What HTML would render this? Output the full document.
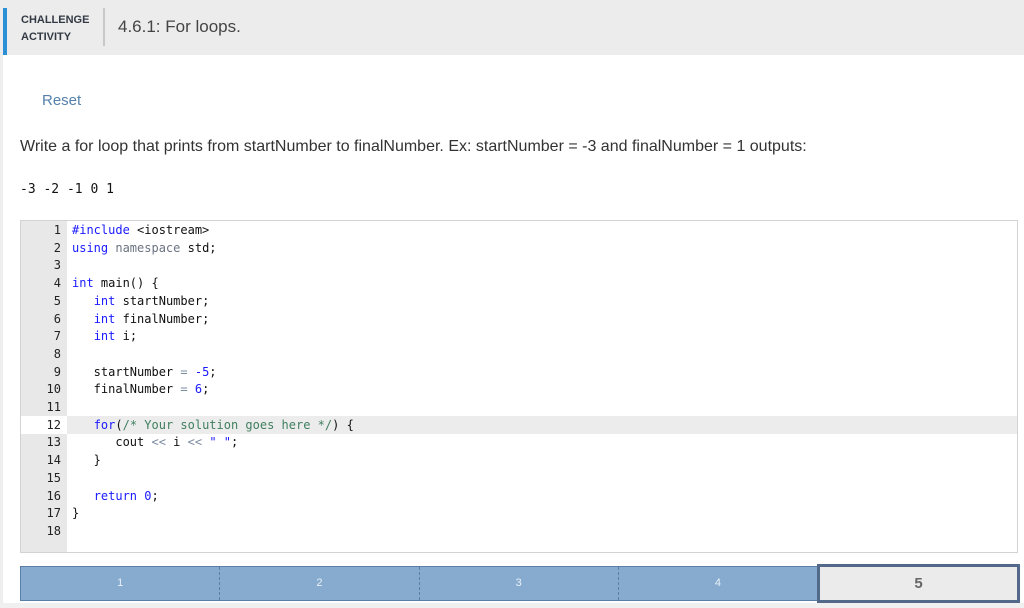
<!DOCTYPE html>
<html><head><meta charset="utf-8"><style>
body{margin:0;width:1024px;height:608px;background:#fff;font-family:"Liberation Sans",sans-serif;position:relative;overflow:hidden}
.hdr{position:absolute;left:0;top:0;width:1024px;height:55px;background:#ececec}
.bar{position:absolute;left:3px;top:8px;width:4px;height:47px;background:#2b8fd6}
.lbl{position:absolute;left:21px;top:12px;font-size:11px;font-weight:bold;color:#333a44;line-height:17px}
.sep{position:absolute;left:103px;top:8px;width:2px;height:38px;background:#c8c8c8}
.ttl{position:absolute;left:118px;top:17px;font-size:17px;color:#444}
.side{position:absolute;left:0;top:55px;width:3px;height:553px;background:#eee}
.reset{position:absolute;left:42px;top:92px;font-size:15px;color:#5580aa}
.desc{position:absolute;left:20px;top:138px;font-size:16px;color:#333}
.out{position:absolute;left:20px;top:182px;font-family:"DejaVu Sans Mono",monospace;font-size:13px;color:#111}
.ed{position:absolute;left:20px;top:220px;width:998px;height:333px;border:1px solid #d3d3d3;box-sizing:border-box;background:#fff}
.gut{position:absolute;left:0;top:0;width:46px;height:100%;background:#e8e8e8}
.hl{position:absolute;left:46px;top:195px;right:0;height:18px;background:#ececec}
.hlg{position:absolute;left:0;top:195px;width:46px;height:18px;background:#fff}
pre{margin:0;position:absolute;top:1px;font-family:"DejaVu Sans Mono",monospace;font-size:12px;line-height:17.7px;color:#111}
.nums{left:0;width:40px;text-align:right;color:#222}
.code{left:51px}
.k{color:#1a1aff}.n{color:#6a7380}.c{color:#3f7f5f}.o{color:#7a8aa0}
.prog{position:absolute;left:20px;top:566px;width:798px;height:35px;background:#87abcf;border:1px solid #5a7ea6;box-sizing:border-box;display:flex}
.prog div{flex:1;text-align:center;color:#e8f0f8;font-size:11px;line-height:33px;border-right:1px dashed #5a7ea6}
.prog div:last-child{border-right:none}
.five{position:absolute;left:817px;top:564px;width:203px;height:39px;border:3px solid #52698a;box-sizing:border-box;background:#ebebeb;text-align:center;line-height:33px;font-weight:bold;font-size:15px;color:#666}
.foot{position:absolute;left:0;top:603px;width:1024px;height:5px;background:#f0f0f0}
</style></head><body>
<div class="hdr"></div><div class="bar"></div>
<div class="lbl">CHALLENGE<br>ACTIVITY</div><div class="sep"></div>
<div class="ttl">4.6.1: For loops.</div>
<div class="side"></div>
<div class="reset">Reset</div>
<div class="desc">Write a for loop that prints from startNumber to finalNumber. Ex: startNumber = -3 and finalNumber = 1 outputs:</div>
<div class="out">-3 -2 -1 0 1</div>
<div class="ed"><div class="gut"></div><div class="hl"></div><div class="hlg"></div>
<pre class="nums">1
2
3
4
5
6
7
8
9
10
11
12
13
14
15
16
17
18</pre>
<pre class="code"><span class="k">#include</span> &lt;iostream&gt;
<span class="k">using</span> <span class="n">namespace</span> std;

<span class="k">int</span> main() {
   <span class="k">int</span> startNumber;
   <span class="k">int</span> finalNumber;
   <span class="k">int</span> i;

   startNumber <span class="o">=</span> <span class="k">-5</span>;
   finalNumber <span class="o">=</span> <span class="k">6</span>;

   <span class="k">for</span>(<span class="c">/* Your solution goes here */</span>) {
      cout <span class="o">&lt;&lt;</span> i <span class="o">&lt;&lt;</span> <span class="k">" "</span>;
   }

   <span class="k">return</span> <span class="k">0</span>;
}
</pre></div>
<div class="prog"><div>1</div><div>2</div><div>3</div><div>4</div></div>
<div class="five">5</div>
<div class="foot"></div>
</body></html>
